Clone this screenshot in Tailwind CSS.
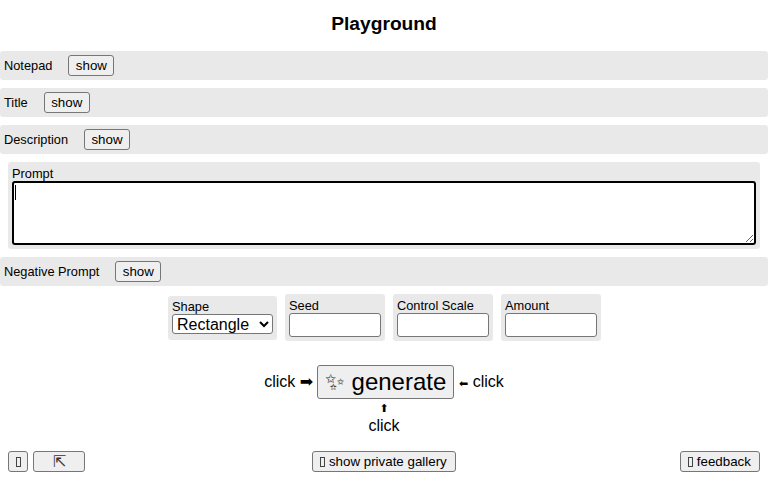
<!DOCTYPE html>
<html lang="en">
<head>
    <meta charset="UTF-8">
    <meta name="viewport" content="width=device-width, initial-scale=1.0">
    <title>Playground</title>
    <script src="https://cdn.jsdelivr.net/npm/@tailwindcss/browser@4"></script>
</head>
<body class="bg-white text-black font-['Liberation_Sans',Arial,sans-serif] text-[12.8px] overflow-hidden">
    <div class="h-[480px] flex flex-col">
        <h1 class="h-[51px] pt-[13px] text-center text-[19.2px] leading-[22px] font-bold">Playground</h1>

        <div class="flex flex-col gap-[8px]">
            <div class="h-[29px] bg-[#e9e9e9] rounded-[3px] flex items-center pl-[4px] gap-[16px]">
                <span>Notepad</span>
                <button class="w-[46px] h-[21px] text-[13.33px] bg-[#efefef] border border-[#767676] rounded-[3px]">show</button>
            </div>
            <div class="h-[29px] bg-[#e9e9e9] rounded-[3px] flex items-center pl-[4px] gap-[16px]">
                <span>Title</span>
                <button class="w-[46px] h-[21px] text-[13.33px] bg-[#efefef] border border-[#767676] rounded-[3px]">show</button>
            </div>
            <div class="h-[29px] bg-[#e9e9e9] rounded-[3px] flex items-center pl-[4px] gap-[16px]">
                <span>Description</span>
                <button class="w-[46px] h-[21px] text-[13.33px] bg-[#efefef] border border-[#767676] rounded-[3px]">show</button>
            </div>

            <div class="mx-[8px] h-[87px] bg-[#e9e9e9] rounded-[3px] px-[4px] pt-[4px]">
                <div class="leading-[15px]">Prompt</div>
                <div class="relative">
                    <textarea class="block w-full h-[64px] bg-white border-2 border-black rounded-[3px] outline-none p-[2px] resize-y text-[13.33px]"></textarea>
                    <!-- text cursor -->
                    <span class="absolute left-[3px] top-[4px] w-[1px] h-[15px] bg-black"></span>
                </div>
            </div>

            <div class="h-[29px] bg-[#e9e9e9] rounded-[3px] flex items-center pl-[4px] gap-[16px]">
                <span>Negative Prompt</span>
                <button class="w-[46px] h-[21px] text-[13.33px] bg-[#efefef] border border-[#767676] rounded-[3px]">show</button>
            </div>
        </div>

        <div class="mt-[8px] pl-[1px] flex justify-center items-center gap-[8px]">
            <div class="w-[109px] h-[44px] mt-[1px] bg-[#e9e9e9] rounded-[3px] px-[4px] pt-[3px]">
                <div class="leading-[15px]">Shape</div>
                <select class="block w-[101px] h-[20px] text-[16px] bg-white border border-[#767676] rounded-[3px] appearance-auto">
                    <option>Rectangle</option>
                </select>
            </div>
            <div class="w-[100px] h-[47px] bg-[#e9e9e9] rounded-[3px] px-[4px] pt-[4px]">
                <div class="leading-[15px]">Seed</div>
                <input class="block w-[92px] h-[24px] bg-white border border-[#767676] rounded-[3px]">
            </div>
            <div class="w-[100px] h-[47px] bg-[#e9e9e9] rounded-[3px] px-[4px] pt-[4px]">
                <div class="leading-[15px]">Control Scale</div>
                <input class="block w-[92px] h-[24px] bg-white border border-[#767676] rounded-[3px]">
            </div>
            <div class="w-[100px] h-[47px] bg-[#e9e9e9] rounded-[3px] px-[4px] pt-[4px]">
                <div class="leading-[15px]">Amount</div>
                <input class="block w-[92px] h-[24px] bg-white border border-[#767676] rounded-[3px]">
            </div>
        </div>

        <div class="mt-[24px] flex justify-center items-center text-[16px]">
            <span>click <span class="font-['DejaVu_Sans']">&#x27A1;&#xFE0E;</span></span>
            <button class="ml-[4px] mr-[5px] w-[137px] h-[34px] text-[24px] leading-[26px] pb-[1px] bg-[#efefef] border border-[#767676] rounded-[3px]"><span class="font-['DejaVu_Sans'] text-[#333]">&#x2728;&#xFE0E;</span> generate</button>
            <span><span class="font-['DejaVu_Sans'] text-[11px]">&#x2B05;&#xFE0E;</span> click</span>
        </div>
        <div class="h-[18px] pt-[1px] text-center text-[11px] leading-[18px] font-['DejaVu_Sans']">&#x2B06;&#xFE0E;</div>
        <div class="text-center text-[16px] leading-[18px]">click</div>

        <div class="mt-[16px] px-[8px] flex items-center justify-between text-[13.33px]">
            <div class="flex gap-[5px] w-[200px]">
                <button class="w-[20px] h-[21px] bg-[#efefef] border border-[#767676] rounded-[3px]"><span class="inline-block w-[5px] h-[10px] border border-[#444] align-[-1px]"></span></button>
                <button class="w-[52px] h-[21px] text-[16px] leading-[18px] text-[#333] bg-[#efefef] border border-[#767676] rounded-[3px]">&#x21F1;</button>
            </div>
            <button class="w-[144px] h-[21px] bg-[#efefef] border border-[#767676] rounded-[3px]"><span class="inline-block w-[5px] h-[10px] -ml-[1px] border border-[#444] align-[-1px]"></span> show private gallery</button>
            <div class="w-[200px] flex justify-end">
                <button class="w-[80px] h-[21px] bg-[#efefef] border border-[#767676] rounded-[3px]"><span class="inline-block w-[5px] h-[10px] -ml-[1px] border border-[#444] align-[-1px]"></span> feedback</button>
            </div>
        </div>
    </div>
</body>
</html>
